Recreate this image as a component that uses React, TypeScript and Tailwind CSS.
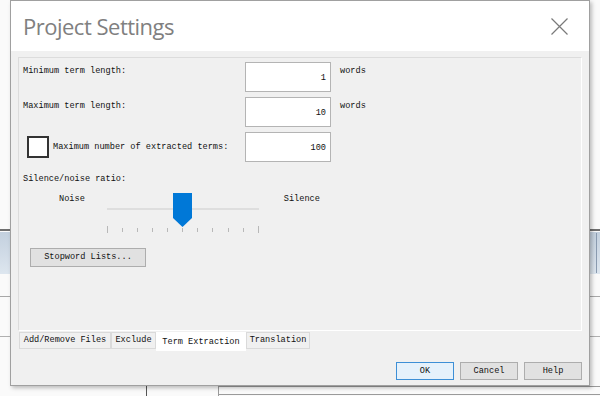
import React from 'react';

const mono = { fontFamily: '"Liberation Mono", "DejaVu Sans Mono", monospace' };

const NumField: React.FC<{ value: string }> = ({ value }) => (
  <div className="w-[86px] h-[30px] bg-white border border-[#b4b4b4] flex items-center justify-end pr-[4px] pt-[3px]">
    {value}
  </div>
);

const Slider: React.FC = () => {
  const ticks = Array.from({ length: 11 }, (_, i) => i);
  return (
    <div className="relative w-[152px] h-[40px]">
      <div className="absolute left-0 right-0 top-[15px] h-[2px] bg-[#dedede]" />
      {ticks.map((i) => (
        <div
          key={i}
          className={`absolute w-px bg-[#b8b8b8] ${i === 0 || i === 10 ? 'top-[33px] h-[7px]' : 'top-[35px] h-[4px]'}`}
          style={{ left: i * 15.1 }}
        />
      ))}
      <svg className="absolute left-[66px] top-0" width="19" height="34" viewBox="0 0 19 34">
        <path d="M0 0H19V25L9.5 34L0 25Z" fill="#0078d7" />
      </svg>
    </div>
  );
};

const Tab: React.FC<{ label: string; active?: boolean; w: string }> = ({ label, active, w }) =>
  active ? (
    <div className={`${w} h-[19px] bg-white flex items-end justify-center pb-[2px]`}>{label}</div>
  ) : (
    <div className={`${w} h-[17px] bg-[#f0f0f0] border border-[#dadada] flex items-center justify-center`}>{label}</div>
  );

export default function App() {
  return (
    <div className="relative w-[600px] h-[396px] overflow-hidden bg-[#fafafa]">
      {/* app behind the dialog */}
      <div className="absolute left-0 right-0 top-[229px] h-[2px] bg-[#6f6f6f]" />
      <div className="absolute left-0 right-0 top-[232px] h-[42px] bg-gradient-to-b from-[#c3d0de] to-[#dde6ef]" />
      <div className="absolute left-[596px] top-[233px] w-px h-[40px] bg-[#8a9bb0]" />
      <div className="absolute left-0 right-0 top-[296px] h-px bg-[#a8a8a8]" />
      <div className="absolute left-0 right-0 top-[336px] h-px bg-[#b0b0b0]" />
      <div className="absolute left-[146px] top-[380px] w-px h-[16px] bg-[#555]" />
      <div className="absolute left-[218px] right-0 top-[386px] h-px bg-[#9a9a9a]" />
      <div className="absolute left-[218px] right-0 top-[394px] h-px bg-[#9a9a9a]" />
      <div className="absolute left-[218px] top-[386px] w-px h-[10px] bg-[#9a9a9a]" />

      {/* dialog window */}
      <div
        className="absolute left-[10px] top-0 w-[580px] h-[386px] border border-[#a0a0a0] bg-[#f0f0f0] flex flex-col shadow-[2px_2px_4px_rgba(0,0,0,0.25)] text-[8.6px] text-[#111]"
        style={mono}
      >
        <div className="h-[50px] bg-white flex items-center justify-between pl-[12px] pr-[21px]">
          <span
            className="text-[22px] tracking-[-0.5px] text-[#808080] leading-none pb-[1px]"
            style={{ fontFamily: '"Open Sans", "Noto Sans", sans-serif' }}
          >
            Project Settings
          </span>
          <svg width="17" height="17" viewBox="0 0 17 17">
            <path d="M0.5 0.5L16.5 16.5M16.5 0.5L0.5 16.5" stroke="#7a7a7a" strokeWidth="1.2" />
          </svg>
        </div>

        <div className="flex-1 flex flex-col pl-[7px] pr-[7px] pt-[6px]">
          {/* tab page */}
          <div className="h-[274px] border border-[#dcdcdc] border-b-white border-r-white flex flex-col pl-[4px] pt-[4px]">
            <div className="flex flex-col gap-[5px]">
              <div className="flex items-start">
                <span className="w-[222px] pt-[3px]">Minimum term length:</span>
                <NumField value="1" />
                <span className="ml-[9px] pt-[3px]">words</span>
              </div>
              <div className="flex items-start">
                <span className="w-[222px] pt-[3px]">Maximum term length:</span>
                <NumField value="10" />
                <span className="ml-[9px] pt-[3px]">words</span>
              </div>
              <div className="flex items-center">
                <div className="w-[222px] flex items-center pl-[4px] gap-[4px]">
                  <div className="w-[22px] h-[22px] bg-white border-2 border-[#333]" />
                  <span>Maximum number of extracted terms:</span>
                </div>
                <NumField value="100" />
              </div>
            </div>

            <div className="mt-[11px]">Silence/noise ratio:</div>

            <div className="flex items-start mt-[7px] pl-[36px]">
              <span className="mt-[0px]">Noise</span>
              <div className="ml-[22px]">
                <Slider />
              </div>
              <span className="ml-[25px] mt-[0px]">Silence</span>
            </div>

            <button className="mt-[15px] ml-[7px] w-[116px] h-[19px] bg-[#e1e1e1] border border-[#adadad] flex items-center justify-center">
              Stopword Lists...
            </button>
          </div>

          {/* tabs */}
          <div className="flex items-start pl-[1px] mt-[1px]">
            <Tab label="Add/Remove Files" w="w-[92px]" />
            <Tab label="Exclude" w="w-[45px]" />
            <Tab label="Term Extraction" w="w-[90px]" active />
            <Tab label="Translation" w="w-[64px]" />
          </div>

          <div className="flex justify-end gap-[6px] mt-[11px]">
            <button className="w-[58px] h-[18px] bg-[#e5f1fb] border border-[#3d8fd6] flex items-center justify-center">OK</button>
            <button className="w-[58px] h-[18px] bg-[#e1e1e1] border border-[#adadad] flex items-center justify-center">Cancel</button>
            <button className="w-[58px] h-[18px] bg-[#e1e1e1] border border-[#adadad] flex items-center justify-center">Help</button>
          </div>
        </div>
      </div>
    </div>
  );
}
